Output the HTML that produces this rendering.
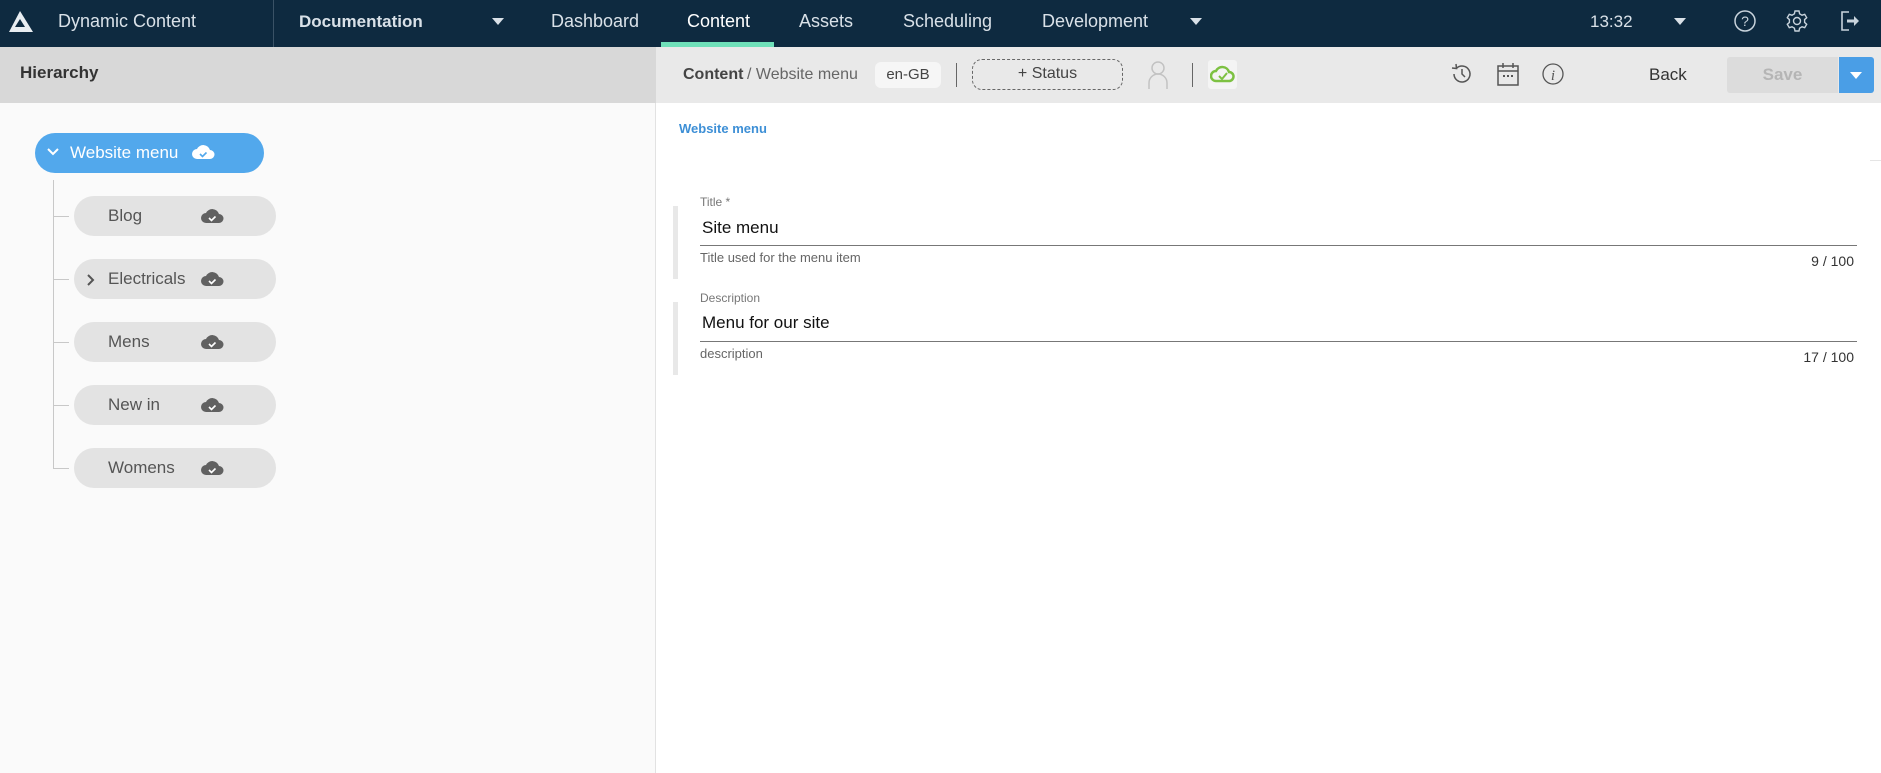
<!DOCTYPE html>
<html><head><meta charset="utf-8"><style>
*{box-sizing:border-box;margin:0;padding:0}
body{width:1881px;height:773px;overflow:hidden;font-family:"Liberation Sans",sans-serif;background:#fff;position:relative}
.a{position:absolute;white-space:nowrap}
.nav{position:absolute;left:0;top:0;width:1881px;height:47px;background:#0e2a40}
.nt{color:#d9e1e8;font-size:18px;top:11px}
.tb{position:absolute;top:47px;height:56px;background:#e9e9e9;left:656px;right:0}
.lh{position:absolute;top:47px;left:0;width:656px;height:56px;background:#d8d8d8}
.lp{position:absolute;top:103px;left:0;width:656px;height:670px;background:#fafafa;border-right:1px solid #e2e2e2}
.pill{position:absolute;left:74px;width:202px;height:40px;border-radius:20px;background:#e3e3e3}
.pill span{position:absolute;left:34px;top:10px;font-size:17px;color:#555}
.pill svg{position:absolute;left:126px;top:11px}
.hl{position:absolute;left:54px;width:15px;height:1px;background:#c8c8c8}
.lbl{font-size:12px;color:#777}
.val{font-size:17px;color:#111}
.help{font-size:13px;color:#666}
.ul{position:absolute;left:700px;width:1157px;height:1px;background:#777}
.bar{position:absolute;left:673px;width:5px;background:#e8e8e8}
</style></head><body>
<div class="nav"></div>
<svg class="a" style="left:6px;top:10px" width="28" height="24" viewBox="0 0 28 24"><path d="M14 1 L27 22 L3 22 Z" fill="#e8edf1"/><path d="M14 9 L19 17 L9 17 Z" fill="#0e2a40"/><path d="M3 22 L8 13 L11 13 L9 17 Z" fill="#0e2a40" opacity=".0"/></svg>
<div class="a nt" style="left:58px">Dynamic Content</div>
<div class="a" style="left:273px;top:0;width:1px;height:47px;background:#3a5266"></div>
<div class="a nt" style="left:299px;font-weight:bold;font-size:17px;top:12px">Documentation</div>
<div class="a" style="left:492px;top:18px;border-left:6px solid transparent;border-right:6px solid transparent;border-top:7px solid #d9e1e8"></div>
<div class="a nt" style="left:551px">Dashboard</div>
<div class="a nt" style="left:687px;color:#fff">Content</div>
<div class="a" style="left:661px;top:42px;width:113px;height:5px;background:#6fe0b9"></div>
<div class="a nt" style="left:799px">Assets</div>
<div class="a nt" style="left:903px">Scheduling</div>
<div class="a nt" style="left:1042px">Development</div>
<div class="a" style="left:1190px;top:18px;border-left:6px solid transparent;border-right:6px solid transparent;border-top:7px solid #d9e1e8"></div>
<div class="a nt" style="left:1590px;font-size:17px;top:12px">13:32</div>
<div class="a" style="left:1674px;top:18px;border-left:6px solid transparent;border-right:6px solid transparent;border-top:7px solid #d9e1e8"></div>
<svg class="a" style="left:1733px;top:9px" width="24" height="24"><circle cx="12" cy="12" r="10" fill="none" stroke="#c8d3dc" stroke-width="1.5"/><text x="12" y="17" text-anchor="middle" font-size="14" fill="#c8d3dc" font-family="Liberation Sans">?</text></svg>
<svg class="a" style="left:1785px;top:9px" width="24" height="24" viewBox="0 0 24 24"><path d="M10 2h4l.6 2.8 2.4 1.4 2.7-.9 2 3.4-2.1 1.9v2.8l2.1 1.9-2 3.4-2.7-.9-2.4 1.4L14 22h-4l-.6-2.8-2.4-1.4-2.7.9-2-3.4 2.1-1.9v-2.8L2.3 8.7l2-3.4 2.7.9 2.4-1.4z" fill="none" stroke="#c8d3dc" stroke-width="1.4"/><circle cx="12" cy="12" r="3.5" fill="none" stroke="#c8d3dc" stroke-width="1.4"/></svg>
<svg class="a" style="left:1838px;top:9px" width="24" height="24"><path d="M11 3H4v18h7" fill="none" stroke="#c8d3dc" stroke-width="1.6"/><path d="M9 12h8" stroke="#c8d3dc" stroke-width="3"/><path d="M16 7l5 5-5 5z" fill="#c8d3dc"/></svg>

<div class="lh"></div>
<div class="a" style="left:20px;top:63px;font-size:17px;font-weight:bold;color:#333">Hierarchy</div>
<div class="tb"></div>
<div class="a" style="left:683px;top:66px;font-size:16px;font-weight:bold;color:#444">Content</div>
<div class="a" style="left:747px;top:66px;font-size:16px;color:#666">/ Website menu</div>
<div class="a" style="left:875px;top:62px;width:66px;height:26px;border-radius:6px;background:#f6f6f6;font-size:15px;color:#444;text-align:center;line-height:26px">en-GB</div>
<div class="a" style="left:956px;top:63px;width:1px;height:24px;background:#666"></div>
<div class="a" style="left:972px;top:59px;width:151px;height:31px;border:1.5px dashed #666;border-radius:10px;font-size:16px;color:#444;text-align:center;line-height:28px">+ Status</div>
<svg class="a" style="left:1147px;top:60px" width="22" height="30"><circle cx="11" cy="8" r="6" fill="none" stroke="#c2c2c2" stroke-width="1.5"/><path d="M2 29v-6a9 9 0 0 1 18 0v6" fill="none" stroke="#c2c2c2" stroke-width="1.5"/></svg>
<div class="a" style="left:1192px;top:63px;width:1px;height:24px;background:#666"></div>
<div class="a" style="left:1208px;top:60px;width:29px;height:29px;border-radius:3px;background:#f4f4f4"></div>
<svg class="a" style="left:1210px;top:64px" width="25" height="20" viewBox="0 0 25 20"><path d="M6 17a5 5 0 0 1 0-10 7 7 0 0 1 13 1 4.5 4.5 0 0 1 0 9z" fill="none" stroke="#7dc142" stroke-width="2.5"/><path d="M9 12l3 3 5-6" fill="none" stroke="#7dc142" stroke-width="2"/></svg>
<svg class="a" style="left:1450px;top:62px" width="24" height="24" viewBox="0 0 24 24"><path d="M4 12a8 8 0 1 0 2.5-5.8" fill="none" stroke="#555" stroke-width="1.5"/><path d="M2 6l4.5.5L6 2" fill="none" stroke="#555" stroke-width="1.5"/><path d="M12 7v5l3 3" fill="none" stroke="#555" stroke-width="1.5"/></svg>
<svg class="a" style="left:1496px;top:61px" width="24" height="26" viewBox="0 0 24 26"><rect x="2" y="5" width="20" height="19" fill="none" stroke="#555" stroke-width="1.5"/><path d="M2 10h20M7 2v5M17 2v5" stroke="#555" stroke-width="1.5"/><path d="M7 15h2M11 15h2M15 15h2" stroke="#555" stroke-width="2"/></svg>
<svg class="a" style="left:1541px;top:62px" width="24" height="24"><circle cx="12" cy="12" r="10" fill="none" stroke="#555" stroke-width="1.3"/><text x="12" y="18" text-anchor="middle" font-size="15" font-style="italic" fill="#555" font-family="Liberation Serif">i</text></svg>
<div class="a" style="left:1649px;top:65px;font-size:17px;color:#333">Back</div>
<div class="a" style="left:1727px;top:57px;width:111px;height:36px;background:#dcdcdc;border-radius:3px 0 0 3px;color:#b5b5b5;font-size:17px;font-weight:bold;text-align:center;line-height:36px">Save</div>
<div class="a" style="left:1839px;top:57px;width:35px;height:36px;background:#4a9ee6;border-radius:0 3px 3px 0"></div>
<div class="a" style="left:1850px;top:72px;border-left:6px solid transparent;border-right:6px solid transparent;border-top:7px solid #fff"></div>

<div class="lp"></div>
<div class="a" style="left:35px;top:133px;width:229px;height:40px;border-radius:20px;background:#52a8ec"></div>
<svg class="a" style="left:46px;top:146px" width="14" height="12"><path d="M2 3l5 5 5-5" fill="none" stroke="#fff" stroke-width="2"/></svg>
<div class="a" style="left:70px;top:143px;font-size:17px;color:#fff">Website menu</div>
<svg class="a" style="left:191px;top:143px" width="24" height="18" viewBox="0 0 24 18"><path d="M6 16a5 5 0 0 1 0-10 7 7 0 0 1 13 1 4.5 4.5 0 0 1 0 9z" fill="#fff"/><path d="M9 11l2.5 2.5 4-4" fill="none" stroke="#52a8ec" stroke-width="1.6"/></svg>
<div class="a" style="left:53px;top:180px;width:1px;height:289px;background:#c8c8c8"></div>
<div class="hl" style="top:216px"></div><div class="hl" style="top:279px"></div><div class="hl" style="top:342px"></div><div class="hl" style="top:405px"></div><div class="hl" style="top:468px"></div>
<div class="pill" style="top:196px"><span>Blog</span><svg width="24" height="18" viewBox="0 0 24 18"><path d="M6 16a5 5 0 0 1 0-10 7 7 0 0 1 13 1 4.5 4.5 0 0 1 0 9z" fill="#616161"/><path d="M9 11l2.5 2.5 4-4" fill="none" stroke="#fff" stroke-width="1.6"/></svg></div>
<div class="pill" style="top:259px"><svg style="left:12px;top:14px" width="10" height="14"><path d="M2 2l5 5-5 5" fill="none" stroke="#555" stroke-width="2"/></svg><span>Electricals</span><svg width="24" height="18" viewBox="0 0 24 18"><path d="M6 16a5 5 0 0 1 0-10 7 7 0 0 1 13 1 4.5 4.5 0 0 1 0 9z" fill="#616161"/><path d="M9 11l2.5 2.5 4-4" fill="none" stroke="#fff" stroke-width="1.6"/></svg></div>
<div class="pill" style="top:322px"><span>Mens</span><svg width="24" height="18" viewBox="0 0 24 18"><path d="M6 16a5 5 0 0 1 0-10 7 7 0 0 1 13 1 4.5 4.5 0 0 1 0 9z" fill="#616161"/><path d="M9 11l2.5 2.5 4-4" fill="none" stroke="#fff" stroke-width="1.6"/></svg></div>
<div class="pill" style="top:385px"><span>New in</span><svg width="24" height="18" viewBox="0 0 24 18"><path d="M6 16a5 5 0 0 1 0-10 7 7 0 0 1 13 1 4.5 4.5 0 0 1 0 9z" fill="#616161"/><path d="M9 11l2.5 2.5 4-4" fill="none" stroke="#fff" stroke-width="1.6"/></svg></div>
<div class="pill" style="top:448px"><span>Womens</span><svg width="24" height="18" viewBox="0 0 24 18"><path d="M6 16a5 5 0 0 1 0-10 7 7 0 0 1 13 1 4.5 4.5 0 0 1 0 9z" fill="#616161"/><path d="M9 11l2.5 2.5 4-4" fill="none" stroke="#fff" stroke-width="1.6"/></svg></div>

<div class="a" style="left:679px;top:121px;font-size:13px;font-weight:bold;color:#3d8fd6">Website menu</div>
<div class="a" style="left:1870px;top:160px;width:11px;height:1px;background:#e5e5e5"></div>
<div class="bar" style="top:206px;height:73px"></div>
<div class="a lbl" style="left:700px;top:195px">Title *</div>
<div class="a val" style="left:702px;top:218px">Site menu</div>
<div class="ul" style="top:245px"></div>
<div class="a help" style="left:700px;top:250px">Title used for the menu item</div>
<div class="a help" style="right:27px;top:253px;color:#333;font-size:14px">9 / 100</div>
<div class="bar" style="top:302px;height:73px"></div>
<div class="a lbl" style="left:700px;top:291px">Description</div>
<div class="a val" style="left:702px;top:313px">Menu for our site</div>
<div class="ul" style="top:341px"></div>
<div class="a help" style="left:700px;top:346px">description</div>
<div class="a help" style="right:27px;top:349px;color:#333;font-size:14px">17 / 100</div>
</body></html>
